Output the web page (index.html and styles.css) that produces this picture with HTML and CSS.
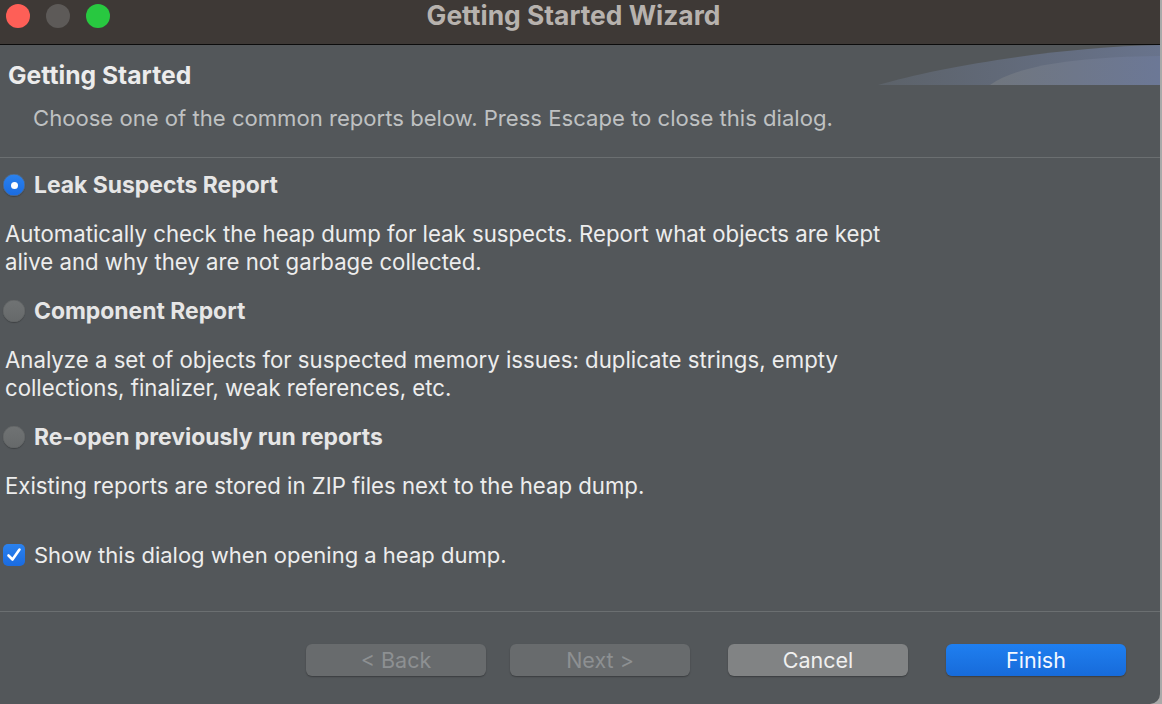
FILE: index.html
```html
<!DOCTYPE html>
<html>
<head>
<meta charset="utf-8">
<link rel="stylesheet" href="styles.css">
</head>
<body>
<div class="window">
  <div class="titlebar">
    <div class="lights">
      <span class="light red"></span>
      <span class="light gray"></span>
      <span class="light green"></span>
    </div>
    <div class="wintitle">Getting Started Wizard</div>
  </div>
  <div class="header">
    <svg class="swoosh" width="282" height="40" viewBox="0 0 282 40">
      <defs>
        <linearGradient id="g1" x1="0" y1="0" x2="1" y2="0">
          <stop offset="0" stop-color="#5c6269"/>
          <stop offset="1" stop-color="#68738c"/>
        </linearGradient>
        <linearGradient id="g2" x1="0" y1="0" x2="1" y2="0">
          <stop offset="0" stop-color="#70767e"/>
          <stop offset="1" stop-color="#6c7896"/>
        </linearGradient>
      </defs>
      <path d="M0 40 C 60 22, 180 2, 282 0 L 282 40 Z" fill="url(#g1)"/>
      <path d="M112 40 C 140 20, 200 12, 282 11 L 282 40 Z" fill="url(#g2)"/>
    </svg>
    <h1 class="heading">Getting Started</h1>
    <p class="subtitle">Choose one of the common reports below. Press Escape to close this dialog.</p>
  </div>
  <div class="content">
    <div class="option">
      <div class="option-row"><span class="radio checked"></span><span class="option-label">Leak Suspects Report</span></div>
      <p class="desc">Automatically check the heap dump for leak suspects. Report what objects are kept<br>alive and why they are not garbage collected.</p>
    </div>
    <div class="option">
      <div class="option-row"><span class="radio"></span><span class="option-label">Component Report</span></div>
      <p class="desc">Analyze a set of objects for suspected memory issues: duplicate strings, empty<br>collections, finalizer, weak references, etc.</p>
    </div>
    <div class="option">
      <div class="option-row"><span class="radio"></span><span class="option-label">Re-open previously run reports</span></div>
      <p class="desc">Existing reports are stored in ZIP files next to the heap dump.</p>
    </div>
    <div class="check-row">
      <span class="checkbox"><svg width="22" height="22" viewBox="0 0 22 22"><path d="M5.5 11.5 L9.5 15.5 L16.5 5.5" fill="none" stroke="#fff" stroke-width="2.6" stroke-linecap="round" stroke-linejoin="round"/></svg></span>
      <span class="check-label">Show this dialog when opening a heap dump.</span>
    </div>
  </div>
  <div class="footer">
    <button class="btn disabled">&lt; Back</button>
    <button class="btn disabled next">Next &gt;</button>
    <button class="btn cancel">Cancel</button>
    <button class="btn primary">Finish</button>
  </div>
</div>
</body>
</html>
```
FILE: styles.css
```css
html, body {
  margin: 0;
  padding: 0;
  background: #a9a9a9;
}
body {
  font-family: Inter, "Open Sans", sans-serif;
  width: 1162px;
  height: 704px;
  overflow: hidden;
}
.window {
  width: 1160px;
  height: 704px;
  background: #53575a;
  border-bottom-right-radius: 10px;
  display: flex;
  flex-direction: column;
  overflow: hidden;
}
.titlebar {
  height: 44px;
  background: #3e3936;
  border-bottom: 1px solid #0c0c0c;
  position: relative;
  display: flex;
  align-items: flex-start;
  justify-content: center;
  flex-shrink: 0;
}
.lights {
  position: absolute;
  left: 6px;
  top: 4px;
  display: flex;
  gap: 16px;
}
.light {
  width: 24px;
  height: 24px;
  border-radius: 50%;
  display: block;
}
.red { background: #fe5f57; }
.gray { background: #5d5a58; }
.green { background: #28c840; }
.wintitle {
  color: #b7b2ae;
  font-weight: 700;
  font-size: 26.4px;
  line-height: 31px;
  margin-left: -13px;
}
.header {
  position: relative;
  height: 113px;
  border-bottom: 1px solid #6b6f71;
  flex-shrink: 0;
  padding-left: 8px;
  box-sizing: border-box;
}
.swoosh {
  position: absolute;
  right: 0;
  top: 0;
}
.heading {
  margin: 0;
  padding-top: 16px;
  font-size: 24.7px;
  line-height: 28px;
  font-weight: 700;
  color: #ececec;
}
.subtitle {
  margin: 15px 0 0 25px;
  font-size: 22.1px;
  line-height: 28px;
  color: #bfc1c2;
}
.content {
  padding-top: 13px;
  border-bottom: 1px solid #6b6f71;
  flex-shrink: 0;
  height: 454px;
  box-sizing: border-box;
}
.option-row {
  display: flex;
  align-items: center;
  height: 28px;
  padding-left: 3px;
  gap: 9px;
}
.radio {
  width: 22px;
  height: 22px;
  border-radius: 50%;
  background: linear-gradient(#707374, #66696a);
  box-shadow: inset 0 0 0 0.5px #5f6263, 0 1px 1px rgba(0,0,0,0.25);
  display: flex;
  align-items: center;
  justify-content: center;
  box-sizing: border-box;
  flex-shrink: 0;
}
.radio.checked {
  background: linear-gradient(#2b82ee, #1a6be0);
}
.radio.checked::after {
  content: "";
  width: 7px;
  height: 7px;
  border-radius: 50%;
  background: #fff;
}
.option-label {
  font-size: 22.9px;
  font-weight: 700;
  color: #e6e6e6;
}
.desc {
  margin: 21px 0 21px 5px;
  font-size: 22.2px;
  line-height: 28px;
  color: #ededed;
}
.check-row {
  display: flex;
  align-items: center;
  height: 28px;
  padding-left: 3px;
  gap: 9px;
  margin-top: 41px;
}
.checkbox {
  width: 22px;
  height: 22px;
  border-radius: 5px;
  background: linear-gradient(#2b82ee, #1a6be0);
  display: block;
  flex-shrink: 0;
}
.checkbox svg { display: block; }
.check-label {
  font-size: 22px;
  color: #ededed;
}
.footer {
  display: flex;
  padding: 32px 0 0 306px;
  gap: 24px;
}
.btn {
  width: 180px;
  height: 32px;
  border: none;
  border-radius: 6px;
  font-family: Inter, "Open Sans", sans-serif;
  font-size: 21.5px;
  padding: 0;
  box-shadow: 0 1px 1.5px rgba(0,0,0,0.3);
}
.btn.disabled {
  background: #686b6d;
  color: #8d9092;
}
.btn.cancel {
  background: #818384;
  color: #f0f0f0;
  margin-left: 14px;
}
.btn.primary {
  background: linear-gradient(#1f7ff0, #176bda);
  color: #f4f8ff;
  margin-left: 14px;
}
```
